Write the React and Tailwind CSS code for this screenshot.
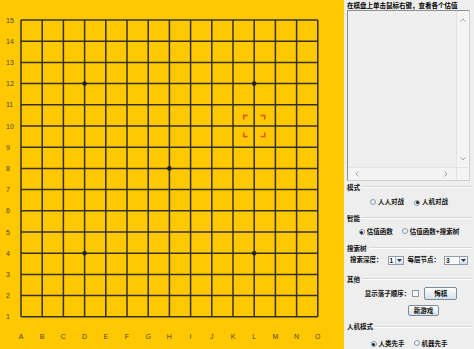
import React from "react";

const LETTERS = "ABCDEFGHIJKLMNO".split("");
const X0 = 21;
const Y0 = 20;
const STEP = 21.2;
const IDX = Array.from({ length: 15 }, (_, i) => i);
const STARS = [
  [3, 3],
  [11, 3],
  [7, 7],
  [3, 11],
  [11, 11],
];

function Board() {
  const end = 14 * STEP;
  const cx = X0 + 11 * STEP;
  const cy = Y0 + 5 * STEP;
  const h = 10.5;
  const a = 4;
  return (
    <svg width="344" height="349" viewBox="0 0 344 349" className="block">
      <rect width="344" height="349" fill="#ffc800" />
      {IDX.map((i) => (
        <line
          key={"h" + i}
          x1={X0}
          x2={X0 + end}
          y1={Y0 + i * STEP}
          y2={Y0 + i * STEP}
          stroke="#34301c"
          strokeWidth="1.5"
        />
      ))}
      {IDX.map((i) => (
        <line
          key={"v" + i}
          y1={Y0}
          y2={Y0 + end}
          x1={X0 + i * STEP}
          x2={X0 + i * STEP}
          stroke="#34301c"
          strokeWidth="1.5"
        />
      ))}
      {STARS.map(([c, r]) => (
        <circle key={c + "-" + r} cx={X0 + c * STEP} cy={Y0 + r * STEP} r="2.3" fill="#222" />
      ))}
      {IDX.map((i) => (
        <text
          key={"r" + i}
          x="6"
          y={Y0 + i * STEP + 2.6}
          fontSize="7"
          fill="#4a4535"
          fontFamily="'Liberation Sans', sans-serif"
        >
          {15 - i}
        </text>
      ))}
      {LETTERS.map((l, i) => (
        <text
          key={"c" + l}
          x={X0 + i * STEP}
          y="338.5"
          fontSize="7"
          fill="#4a4535"
          textAnchor="middle"
          fontFamily="'Liberation Sans', sans-serif"
        >
          {l}
        </text>
      ))}
      <g stroke="#e4501a" strokeWidth="1.5" fill="none">
        <path d={`M ${cx - h} ${cy - h + a} V ${cy - h} H ${cx - h + a}`} />
        <path d={`M ${cx + h - a} ${cy - h} H ${cx + h} V ${cy - h + a}`} />
        <path d={`M ${cx - h} ${cy + h - a} V ${cy + h} H ${cx - h + a}`} />
        <path d={`M ${cx + h - a} ${cy + h} H ${cx + h} V ${cy + h - a}`} />
      </g>
    </svg>
  );
}

function Radio({ checked }) {
  return (
    <span className="inline-flex w-[6px] h-[6px] shrink-0 rounded-full border border-[#8597ab] bg-[#eef4fa] items-center justify-center">
      {checked && <span className="w-[3px] h-[3px] rounded-full bg-[#1e1e1e]" />}
    </span>
  );
}

function Combo({ value, w }) {
  return (
    <div className={`flex h-[9px] ${w} border border-[#8d9cae] bg-white`}>
      <span className="flex-1 text-[6.5px] leading-[7px] pl-[1px] font-bold text-[#111] font-['Liberation_Sans',sans-serif]">
        {value}
      </span>
      <span className="w-[8px] bg-linear-to-b from-[#f7fafd] to-[#d3dde8] border-l border-[#a9b6c5] flex items-center justify-center">
        <svg width="5" height="3" viewBox="0 0 5 3">
          <path d="M0 0 H5 L2.5 3 Z" fill="#1f3350" />
        </svg>
      </span>
    </div>
  );
}

function Btn({ children, w, h }) {
  return (
    <div
      className={`${w} ${h} border border-[#7b8b9c] rounded-[2px] bg-linear-to-b from-[#ffffff] to-[#d6e0ea] flex items-center justify-center text-[6.5px] font-bold text-[#111]`}
    >
      {children}
    </div>
  );
}

function Title({ children }) {
  return (
    <div className="flex items-center h-[10px] pl-[3px] pr-[2px]">
      <span className="text-[6.5px] font-bold leading-none text-[#111]">{children}</span>
      <span className="flex-1 ml-[2px] h-[2px] border-t border-[#d6d6d6] border-b border-b-white" />
    </div>
  );
}

function Chev({ d, w = 6, h = 4 }) {
  return (
    <svg width={w} height={h} viewBox={`0 0 ${w} ${h}`}>
      <polyline points={d} fill="none" stroke="#a3a3a3" strokeWidth="1" />
    </svg>
  );
}

export default function App() {
  return (
    <div className="flex w-[474px] h-[349px] overflow-hidden bg-[#ffc800] font-['Noto_Sans_CJK_SC','Liberation_Sans',sans-serif]">
      <div className="w-[344px] h-[349px] shrink-0">
        <Board />
      </div>
      <div className="w-[130px] h-[349px] bg-[#eeeeee] flex flex-col">
        <div className="h-[10px] pl-[3px] text-[6.5px] leading-[10px] font-bold text-[#000] whitespace-nowrap">
          在棋盘上单击鼠标右键，查看各个估值
        </div>
        <div className="ml-[3px] mr-[4px] h-[171px] flex flex-col border border-[#8f8f8f] border-r-[#d0d0d0] border-b-[#d0d0d0]">
          <div className="flex flex-1 min-h-0">
            <div className="flex-1 bg-[#efefef]" />
            <div className="w-[13px] bg-[#f4f4f4] border-l border-[#e3e3e3] flex flex-col justify-between items-center pt-[7px] pb-[6px]">
              <Chev d="0.5,3.5 3,1 5.5,3.5" />
              <Chev d="0.5,0.5 3,3 5.5,0.5" />
            </div>
          </div>
          <div className="h-[13px] flex bg-[#f4f4f4] border-t border-[#e3e3e3]">
            <div className="flex-1 flex items-center justify-between pl-[7px] pr-[8px]">
              <Chev d="3.5,0.5 1,3 3.5,5.5" w={4} h={6} />
              <Chev d="0.5,0.5 3,3 0.5,5.5" w={4} h={6} />
            </div>
            <div className="w-[13px] border-l border-[#e3e3e3]" />
          </div>
        </div>

        {/* 模式 */}
        <div className="h-[28px] pt-[1px] flex flex-col">
          <Title>模式</Title>
          <div className="mt-[5px] h-[10px] flex items-center justify-center text-[6.5px] font-bold text-[#111]">
            <Radio />
            <span className="ml-[2px]">人人对战</span>
            <span className="ml-[10px]">
              <Radio checked />
            </span>
            <span className="ml-[2px]">人机对战</span>
          </div>
        </div>

        {/* 智能 */}
        <div className="h-[33px] pt-[4px] flex flex-col">
          <Title>智能</Title>
          <div className="mt-[4px] h-[10px] flex items-center justify-center text-[6.5px] font-bold text-[#111]">
            <Radio checked />
            <span className="ml-[2px]">估值函数</span>
            <span className="ml-[9px]">
              <Radio />
            </span>
            <span className="ml-[2px]">估值函数+搜索树</span>
          </div>
        </div>

        {/* 搜索树 */}
        <div className="h-[29px] pt-[1px] flex flex-col">
          <Title>搜索树</Title>
          <div className="mt-[2px] h-[10px] flex items-center justify-center text-[6.5px] font-bold text-[#111]">
            <span>搜索深度：</span>
            <span className="ml-[5px]">
              <Combo value="1" w="w-[16px]" />
            </span>
            <span className="ml-[4px]">每层节点：</span>
            <span className="ml-[4px]">
              <Combo value="3" w="w-[24px]" />
            </span>
          </div>
        </div>

        {/* 其他 */}
        <div className="h-[49px] pt-[3px] flex flex-col">
          <Title>其他</Title>
          <div className="mt-[3px] h-[13px] flex items-center justify-center pl-[4px] text-[6.5px] font-bold text-[#111]">
            <span>显示落子顺序：</span>
            <span className="ml-[2px] w-[7px] h-[7px] border border-[#8597ab] bg-[#f6f9fc]" />
            <span className="ml-[5px]">
              <Btn w="w-[33px]" h="h-[13px]">悔棋</Btn>
            </span>
          </div>
          <div className="mt-[5px] h-[11px] flex pl-[64px]">
            <Btn w="w-[31px]" h="h-[11px]">新游戏</Btn>
          </div>
        </div>

        {/* 人机模式 */}
        <div className="h-[29px] pt-[2px] flex flex-col">
          <Title>人机模式</Title>
          <div className="mt-[8px] h-[10px] flex items-center justify-center text-[6.5px] font-bold text-[#111]">
            <Radio checked />
            <span className="ml-[2px]">人类先手</span>
            <span className="ml-[9px]">
              <Radio />
            </span>
            <span className="ml-[2px]">机器先手</span>
          </div>
        </div>
      </div>
    </div>
  );
}
